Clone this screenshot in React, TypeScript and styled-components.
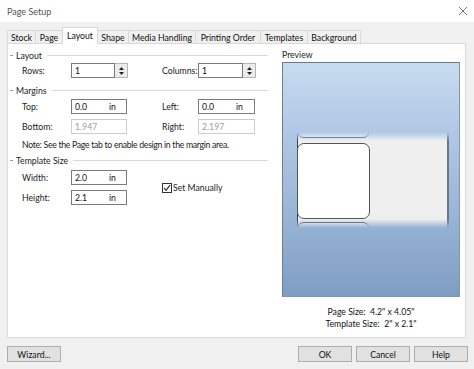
import React from "react";
import styled, { createGlobalStyle } from "styled-components";

const Global = createGlobalStyle`
  html, body { margin: 0; padding: 0; }
  body {
    width: 474px; height: 369px; overflow: hidden; background: #f0f0f0;
    font-family: Lato, "Noto Sans", sans-serif; font-size: 8.7px; color: #1b1b1b;
  }
  * { box-sizing: border-box; }
`;

const Window = styled.div`
  width: 474px; height: 369px; display: flex; flex-direction: column; background: #f0f0f0;
`;
const TitleBar = styled.div`
  height: 22px; flex: none; background: #fff; display: flex; align-items: center;
  justify-content: space-between; padding: 0 6px 0 7px; color: #555; font-size: 9px;
`;
const Body = styled.div`
  display: flex; flex-direction: column; padding: 5px 8px 0 7px;
`;
const TabStrip = styled.div`
  height: 16px; display: flex; align-items: flex-end; margin-left: 1px; position: relative; z-index: 1;
`;
const Tab = styled.div<{ $w: number; $active?: boolean }>`
  width: ${(p) => p.$w}px;
  height: ${(p) => (p.$active ? 17 : 13)}px;
  margin-bottom: ${(p) => (p.$active ? -1 : 0)}px;
  margin-left: -1px;
  background: ${(p) => (p.$active ? "#fff" : "#f0f0f0")};
  border: 1px solid #d9d9d9; border-bottom: none;
  display: flex; align-items: center; justify-content: center;
  padding-bottom: ${(p) => (p.$active ? 2 : 0)}px;
  white-space: nowrap; color: #111;
`;
const Panel = styled.div`
  height: 295px; background: #fff; border: 1px solid #d9d9d9;
  display: flex; padding: 5px 5px 0 2px; gap: 14px;
`;
const LeftCol = styled.div`
  width: 258px; display: flex; flex-direction: column;
`;
const RightCol = styled.div`
  width: 178px; display: flex; flex-direction: column;
`;
const GroupHeader = styled.div<{ $mt?: number }>`
  height: 12px; display: flex; align-items: center; margin-top: ${(p) => p.$mt ?? 0}px;
  &::before { content: ""; width: 3px; height: 1px; background: #9a9a9a; margin-right: 3px; }
  &::after { content: ""; flex: 1; height: 1px; background: #d8d8d8; margin-left: 5px; }
`;
const FieldGrid = styled.div<{ $mt?: number; $gap?: number }>`
  display: grid; grid-template-columns: 49px 91px 36px auto; align-items: center;
  padding-left: 12px; margin-top: ${(p) => p.$mt ?? 0}px; row-gap: ${(p) => p.$gap ?? 0}px;
`;
const Label = styled.span<{ $row?: number }>`
  line-height: 15px; white-space: nowrap;
  ${(p) => (p.$row ? `grid-column: 1; grid-row: ${p.$row};` : "")}
`;
const Field = styled.div<{ $row?: number }>`
  display: flex;
  ${(p) => (p.$row ? `grid-column: 2; grid-row: ${p.$row};` : "")}
`;
const InputBox = styled.div<{ $w: number; $disabled?: boolean }>`
  width: ${(p) => p.$w}px; height: 15px; background: #fff;
  border: 1px solid ${(p) => (p.$disabled ? "#cccccc" : "#7a7a7a")};
  color: ${(p) => (p.$disabled ? "#9d9d9d" : "#111")};
  display: flex; align-items: center; padding-left: 3px; white-space: nowrap;
`;
const Value = styled.span`
  width: 34px;
`;
const Spinner = styled.div`
  width: 13px; height: 15px; border: 1px solid #b5b5b5; border-left: none; background: #ececec;
  display: flex; flex-direction: column; align-items: center; justify-content: center; gap: 2px;
`;
const Note = styled.div`
  padding-left: 12px; margin-top: 5px; line-height: 12px; white-space: nowrap; letter-spacing: -0.3px;
`;
const CheckRow = styled.label`
  grid-column: 3 / span 2; grid-row: 1 / span 2; display: flex; align-items: center; gap: 1px;
  white-space: nowrap;
`;
const CheckBox = styled.span`
  width: 10px; height: 10px; border: 1px solid #333; background: #fff;
  display: flex; align-items: center; justify-content: center;
`;
const PreviewLabel = styled.div`
  height: 12px; line-height: 12px;
`;
const PreviewBox = styled.div`
  margin-top: 1px; height: 235px; position: relative; overflow: hidden;
  background: linear-gradient(to bottom, #c8dbf0 0%, #adc6e3 33%, #9bb7d8 62%, #7f9dc3 100%);
  border: 1px solid #8796a7; border-top-color: #6a7888; border-left-color: #6f7d8d;
`;
const Page = styled.div`
  position: absolute; left: 14px; top: 69px; width: 152px; height: 96px;
  background: #efefef; border-left: 1px solid #3c3c3c; border-right: 2px solid #6a7888;
  -webkit-mask-image: linear-gradient(to bottom, transparent 0, #000 9px, #000 calc(100% - 9px), transparent 100%);
  mask-image: linear-gradient(to bottom, transparent 0, #000 9px, #000 calc(100% - 9px), transparent 100%);
`;
const LabelCell = styled.div<{ $top: number }>`
  position: absolute; left: -1px; top: ${(p) => p.$top}px; width: 73px; height: 76px;
  background: #fff; border: 1px solid #555; border-radius: 7px;
`;
const SizeText = styled.div<{ $mt?: number }>`
  text-align: center; line-height: 12px; white-space: pre; color: #111; margin-top: ${(p) => p.$mt ?? 0}px;
`;
const Footer = styled.div`
  display: flex; justify-content: space-between; padding: 8px 6px 0 7px;
`;
const ButtonGroup = styled.div`
  display: flex; gap: 4px;
`;
const Button = styled.button`
  width: 54px; height: 16px; padding: 0; background: #e1e1e1; border: 1px solid #adadad;
  font: inherit; color: #111; display: flex; align-items: center; justify-content: center;
`;

const SpinArrows = () => (
  <Spinner>
    <svg width="5" height="3" viewBox="0 0 5 3"><path d="M0 3 L2.5 0 L5 3 Z" fill="#222" /></svg>
    <svg width="5" height="3" viewBox="0 0 5 3"><path d="M0 0 L2.5 3 L5 0 Z" fill="#222" /></svg>
  </Spinner>
);

const tabs: [string, number][] = [
  ["Stock", 29], ["Page", 28], ["Layout", 36], ["Shape", 32], ["Media Handling", 68],
  ["Printing Order", 66], ["Templates", 48], ["Background", 54],
];

export default function App() {
  return (
    <>
      <Global />
      <Window>
        <TitleBar>
          <span>Page Setup</span>
          <svg width="10" height="10" viewBox="0 0 10 10">
            <path d="M1 1 L9 9 M9 1 L1 9" stroke="#777" strokeWidth="1" />
          </svg>
        </TitleBar>
        <Body>
          <TabStrip>
            {tabs.map(([t, w]) => (
              <Tab key={t} $w={w} $active={t === "Layout"}>{t}</Tab>
            ))}
          </TabStrip>
          <Panel>
            <LeftCol>
              <GroupHeader>Layout</GroupHeader>
              <FieldGrid $mt={2}>
                <Label>Rows:</Label>
                <Field><InputBox $w={44}>1</InputBox><SpinArrows /></Field>
                <Label>Columns:</Label>
                <Field><InputBox $w={45}>1</InputBox><SpinArrows /></Field>
              </FieldGrid>
              <GroupHeader $mt={6}>Margins</GroupHeader>
              <FieldGrid $mt={3} $gap={5}>
                <Label>Top:</Label>
                <Field><InputBox $w={56}><Value>0.0</Value>in</InputBox></Field>
                <Label>Left:</Label>
                <Field><InputBox $w={57}><Value>0.0</Value>in</InputBox></Field>
                <Label>Bottom:</Label>
                <Field><InputBox $w={56} $disabled>1.947</InputBox></Field>
                <Label>Right:</Label>
                <Field><InputBox $w={57} $disabled>2.197</InputBox></Field>
              </FieldGrid>
              <Note>Note: See the Page tab to enable design in the margin area.</Note>
              <GroupHeader $mt={3}>Template Size</GroupHeader>
              <FieldGrid $mt={4} $gap={5}>
                <Label $row={1}>Width:</Label>
                <Field $row={1}><InputBox $w={56}><Value>2.0</Value>in</InputBox></Field>
                <Label $row={2}>Height:</Label>
                <Field $row={2}><InputBox $w={56}><Value>2.1</Value>in</InputBox></Field>
                <CheckRow>
                  <CheckBox>
                    <svg width="8" height="8" viewBox="0 0 8 8">
                      <path d="M1 4 L3 6.3 L7 1.2" stroke="#222" strokeWidth="1.1" fill="none" />
                    </svg>
                  </CheckBox>
                  Set Manually
                </CheckRow>
              </FieldGrid>
            </LeftCol>
            <RightCol>
              <PreviewLabel>Preview</PreviewLabel>
              <PreviewBox>
                <Page>
                  <LabelCell $top={-70} />
                  <LabelCell $top={11} />
                  <LabelCell $top={90} />
                </Page>
              </PreviewBox>
              <SizeText $mt={9}>{'Page Size:  4.2" x 4.05"'}</SizeText>
              <SizeText>{'Template Size:  2" x 2.1"'}</SizeText>
            </RightCol>
          </Panel>
        </Body>
        <Footer>
          <Button>Wizard...</Button>
          <ButtonGroup>
            <Button>OK</Button>
            <Button>Cancel</Button>
            <Button>Help</Button>
          </ButtonGroup>
        </Footer>
      </Window>
    </>
  );
}
